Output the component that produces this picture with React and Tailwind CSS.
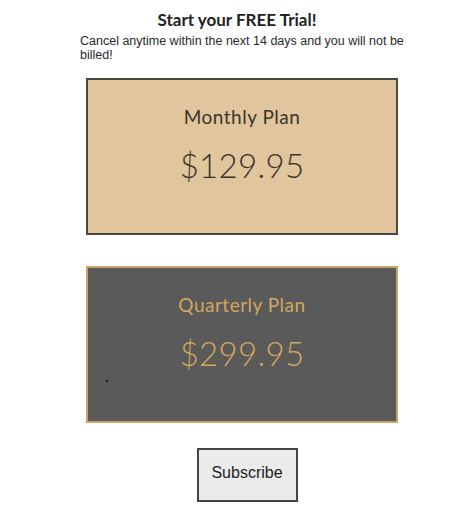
import React from 'react';

const PlanCard = ({ title, price, dark }) => (
  <div
    className={
      dark
        ? 'relative w-[312px] h-[157px] border-2 border-[#c8a466] bg-[#5a5a5a] text-[#d3a75e] flex flex-col items-center'
        : 'relative w-[312px] h-[157px] border-2 border-[#4b4640] bg-[#e1c59c] text-[#3b342c] flex flex-col items-center'
    }
  >
    <div className="mt-[25px] text-[19px] leading-[24px] font-['Lato',sans-serif] tracking-[0.5px]">{title}</div>
    <div className="mt-[17px] text-[33px] leading-[38px] font-['Lato',sans-serif] font-light tracking-[0.3px]">{price}</div>
    {dark && <span className="absolute left-[18px] top-[112px] w-[2px] h-[2px] bg-black rounded-full" />}
  </div>
);

const App = () => {
  return (
    <div className="w-[474px] h-[528px] bg-white flex flex-col items-center">
      <h1 className="mt-[9px] text-[17px] leading-[22px] font-bold text-[#222] font-['Lato',sans-serif]">
        Start your FREE Trial!
      </h1>
      <p className="self-start ml-[80px] w-[330px] mt-[3px] text-[12.5px] leading-[14px] text-[#2a2a2a] font-['Liberation_Sans',Arial,sans-serif]">
        Cancel anytime within the next 14 days and you will not be billed!
      </p>

      <div className="mt-[16px] flex flex-col items-center gap-[31px] ml-[10px]">
        <PlanCard title="Monthly Plan" price="$129.95" />
        <PlanCard title="Quarterly Plan" price="$299.95" dark />
      </div>

      <button className="mt-[25px] ml-[20px] w-[101px] h-[54px] pb-[4px] bg-[#ebebeb] border-2 border-[#444] text-[16px] text-[#222] font-['Liberation_Sans',Arial,sans-serif]">
        Subscribe
      </button>
    </div>
  );
};

export default App;
